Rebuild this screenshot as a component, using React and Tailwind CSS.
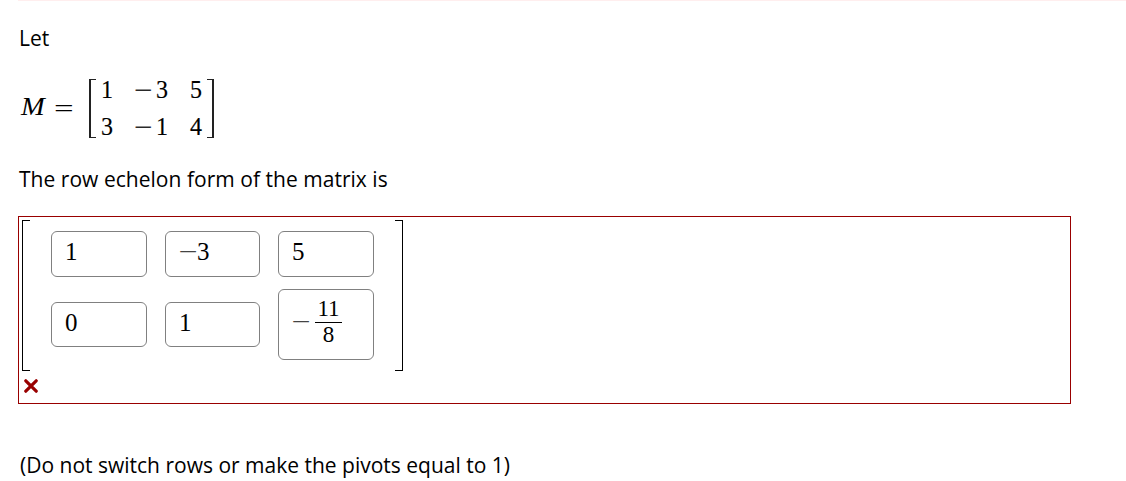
import React from 'react';

const matrix = [
  ['1', '3'],
  ['−3', '−1'],
  ['5', '4'],
];

function Digit({ children }) {
  return <span className="inline-block origin-left scale-y-[1.02]">{children}</span>;
}

function Minus({ className = '' }) {
  return <span className={`inline-block ${className}`}>−</span>;
}

function MatrixEntry({ value }) {
  const negative = value.startsWith('−');
  return (
    <span className="flex h-[37px] items-center justify-center leading-[37px] [-webkit-text-stroke:0.15px_black]">
      {negative && <Minus className="mr-[4px] w-[17px] scale-x-[1.35] text-center" />}
      <Digit>{value.replace('−', '')}</Digit>
    </span>
  );
}

function AnswerBox({ value, className }) {
  const negative = value.startsWith('−');
  return (
    <div className={`flex rounded-[6px] border border-[#808080] pl-[13px] leading-[40px] ${className}`}>
      {negative && <Minus className="w-[18px] scale-x-[1.35] text-center text-[#444]" />}
      <Digit>{value.replace('−', '')}</Digit>
    </div>
  );
}

function FractionBox() {
  return (
    <div className="flex h-[71px] w-[96px] rounded-[6px] border border-[#808080] pl-[13px]">
      <Minus className="mt-[11px] w-[18px] scale-x-[1.35] text-center leading-[42px] text-[#444]" />
      <div className="ml-[5px] flex w-[27px] flex-col pt-[8px] text-center text-[23px]">
        <span className="h-[25px] border-b border-black leading-[22px]">11</span>
        <span className="h-[24px] leading-[24px]">8</span>
      </div>
    </div>
  );
}

export default function App() {
  return (
    <div className="h-[481px] w-[1126px] overflow-hidden bg-white pl-[18px] font-['Open_Sans',sans-serif] text-[21px] text-black">
      <div className="h-px bg-[#ffeeee]" />
      <p className="mt-[22px] h-[30px] pl-px leading-[30px]">Let</p>

      {/* Given matrix */}
      <div className="mt-[26px] flex h-[59px] font-['Liberation_Serif',serif] text-[24px]">
        <span className="w-[36px] pl-[3px] text-[25px] italic leading-[55px]">
          <span className="inline-block origin-left scale-x-[1.14]">M</span>
        </span>
        <span className="w-[20px] text-center leading-[58px]"><span className="inline-block scale-x-[1.45]">=</span></span>
        <div className="ml-[15px] w-[7px] border-y border-l-2 border-[#222]" />
        <div className="flex -translate-y-[7px]">
          {matrix.map((column, i) => (
            <div key={i} className={['ml-[5px] w-[12px]', 'ml-[21px] w-[35px]', 'ml-[21px] w-[12px]'][i]}>
              {column.map((value) => <MatrixEntry key={value} value={value} />)}
            </div>
          ))}
        </div>
        <div className="ml-[5px] w-[7px] border-y border-r-2 border-[#222]" />
      </div>

      <p className="mt-[26px] h-[30px] pl-px leading-[30px] tracking-[0.03px]">The row echelon form of the matrix is</p>

      {/* Submitted answer */}
      <div className="mt-[22px] h-[188px] w-[1053px] border border-[#990000] pl-[3px] pt-[3px]">
        <div className="flex h-[151px] font-['Liberation_Serif',serif] text-[25px]">
          <div className="w-[8px] border-y border-l border-black" />
          <div className="ml-[21px] grid grid-cols-[96px_95px_96px] grid-rows-[46px_71px] gap-x-[18px] gap-y-[12px] pt-[11px]">
            <AnswerBox value="1" className="h-[46px]" />
            <AnswerBox value="−3" className="h-[46px]" />
            <AnswerBox value="5" className="h-[46px]" />
            <AnswerBox value="0" className="mt-[13px] h-[45px]" />
            <AnswerBox value="1" className="mt-[13px] h-[45px]" />
            <FractionBox />
          </div>
          <div className="ml-[21px] w-[8px] border-y border-r border-black" />
        </div>
        <svg className="ml-[2px] mt-[8px]" width="14" height="14" viewBox="0 0 14 14" fill="none" stroke="#990000" strokeWidth="3.2" strokeLinecap="round">
          <path d="M1.8 1.8l10.4 10.4M12.2 1.8L1.8 12.2" />
        </svg>
      </div>

      <p className="mt-[46px] h-[30px] pl-[2px] leading-[30px]">(Do not switch rows or make the pivots equal to 1)</p>
    </div>
  );
}
